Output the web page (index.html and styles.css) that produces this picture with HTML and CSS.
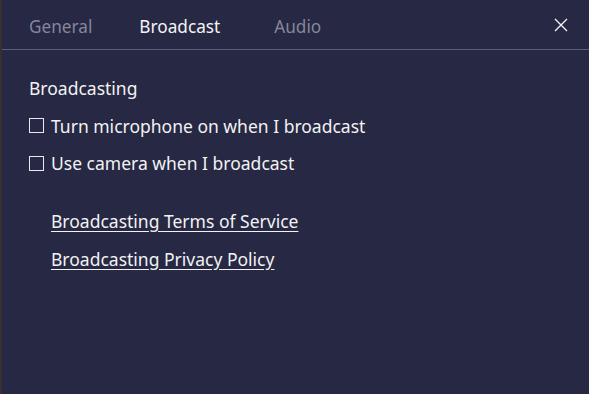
FILE: index.html
```html
<!DOCTYPE html>
<html lang="en">
<head>
  <meta charset="UTF-8">
  <title>Settings</title>
  <link rel="stylesheet" href="styles.css">
</head>
<body>
  <div class="window">
    <div class="tabs">
      <span class="tab">General</span>
      <span class="tab active">Broadcast</span>
      <span class="tab">Audio</span>
      <button class="close" aria-label="Close">
        <svg width="14" height="14" viewBox="0 0 14 14">
          <path d="M1 1 L13 13 M13 1 L1 13" stroke="#f2f2f2" stroke-width="1.4" fill="none"/>
        </svg>
      </button>
    </div>

    <div class="content">
      <div class="section-title">Broadcasting</div>
      <label class="check"><span class="box"></span>Turn microphone on when I broadcast</label>
      <label class="check"><span class="box"></span>Use camera when I broadcast</label>

      <div class="links">
        <a href="#">Broadcasting Terms of Service</a>
        <a href="#">Broadcasting Privacy Policy</a>
      </div>
    </div>
  </div>
</body>
</html>
```

FILE: styles.css
```css
html, body {
  margin: 0;
  padding: 0;
  height: 100%;
}

body {
  background: #262844;
  font-family: "Noto Sans", "Open Sans", sans-serif;
  color: #f2f2f2;
}

.window {
  height: 100%;
  border-left: 2px solid #3a2e30;
  box-sizing: border-box;
}

.tabs {
  display: flex;
  align-items: center;
  height: 46px;
  padding: 3px 0 0 27px;
  border-bottom: 1px solid #5c5e74;
  font-size: 17.2px;
}

.tab {
  color: #85869a;
  margin-right: 47px;
}

.tab.active {
  color: #f4f4f4;
  margin-right: 54px;
}

.close {
  margin-left: auto;
  margin-right: 21px;
  margin-bottom: 3px;
  background: none;
  border: none;
  padding: 0;
  width: 14px;
  height: 14px;
  cursor: pointer;
}

.content {
  padding: 26px 0 0 27px;
  font-size: 17.5px;
}

.section-title {
  line-height: 24px;
  margin-bottom: 13.5px;
}

.check {
  display: flex;
  align-items: center;
  line-height: 24px;
  margin-bottom: 13.5px;
}

.box {
  width: 13px;
  height: 13px;
  border: 1px solid #e8e8ee;
  margin-right: 7px;
}

.links {
  padding-left: 22px;
  margin-top: 34px;
}

.links a {
  display: block;
  color: #f2f2f2;
  line-height: 24px;
  margin-bottom: 13.5px;
  text-underline-offset: 3px;
}
```
